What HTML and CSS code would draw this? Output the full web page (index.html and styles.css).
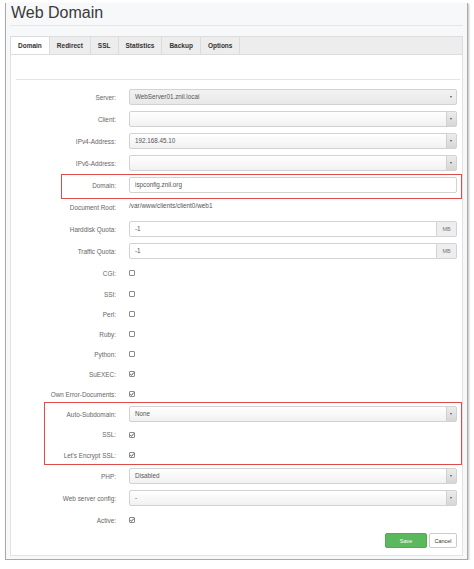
FILE: index.html
```html
<!DOCTYPE html>
<html>
    <head>
        <link rel="stylesheet" href="styles.css">
    </head>
    <body>
        <div class="sheet">
            <h1 class="title">Web Domain</h1>

            <div class="tabs">
                <span class="tab active">Domain</span>
                <span class="tab">Redirect</span>
                <span class="tab">SSL</span>
                <span class="tab">Statistics</span>
                <span class="tab">Backup</span>
                <span class="tab">Options</span>
            </div>

            <div class="panel">
                <div class="panel-head"></div>

                <form class="form">
                    <div class="row">
                        <label>Server:</label>
                        <div class="select locked">WebServer01.znil.local<span class="arrow"></span></div>
                    </div>
                    <div class="row">
                        <label>Client:</label>
                        <div class="select"><span class="arrow"></span></div>
                    </div>
                    <div class="row">
                        <label>IPv4-Address:</label>
                        <div class="select">192.168.45.10<span class="arrow"></span></div>
                    </div>
                    <div class="row">
                        <label>IPv6-Address:</label>
                        <div class="select"><span class="arrow"></span></div>
                    </div>
                    <div class="row">
                        <label>Domain:</label>
                        <div class="text-input">ispconfig.znil.org</div>
                    </div>
                    <div class="row">
                        <label>Document Root:</label>
                        <div class="static">/var/www/clients/client0/web1</div>
                    </div>
                    <div class="row">
                        <label>Harddisk Quota:</label>
                        <div class="group">
                            <div class="text-input">-1</div>
                            <span class="addon">MB</span>
                        </div>
                    </div>
                    <div class="row">
                        <label>Traffic Quota:</label>
                        <div class="group">
                            <div class="text-input">-1</div>
                            <span class="addon">MB</span>
                        </div>
                    </div>
                    <div class="row tall">
                        <label>CGI:</label>
                        <span class="check"></span>
                    </div>
                    <div class="row short">
                        <label>SSI:</label>
                        <span class="check"></span>
                    </div>
                    <div class="row short">
                        <label>Perl:</label>
                        <span class="check"></span>
                    </div>
                    <div class="row short">
                        <label>Ruby:</label>
                        <span class="check"></span>
                    </div>
                    <div class="row short">
                        <label>Python:</label>
                        <span class="check"></span>
                    </div>
                    <div class="row short">
                        <label>SuEXEC:</label>
                        <span class="check on"><svg viewBox="0 0 6 6"><path d="M1.2 3.1 L2.5 4.3 L4.9 1.5"/></svg></span>
                    </div>
                    <div class="row short">
                        <label>Own Error-Documents:</label>
                        <span class="check on"><svg viewBox="0 0 6 6"><path d="M1.2 3.1 L2.5 4.3 L4.9 1.5"/></svg></span>
                    </div>
                    <div class="row short">
                        <label>Auto-Subdomain:</label>
                        <div class="select">None<span class="arrow"></span></div>
                    </div>
                    <div class="row mid">
                        <label>SSL:</label>
                        <span class="check on"><svg viewBox="0 0 6 6"><path d="M1.2 3.1 L2.5 4.3 L4.9 1.5"/></svg></span>
                    </div>
                    <div class="row short">
                        <label>Let's Encrypt SSL:</label>
                        <span class="check on"><svg viewBox="0 0 6 6"><path d="M1.2 3.1 L2.5 4.3 L4.9 1.5"/></svg></span>
                    </div>
                    <div class="row">
                        <label>PHP:</label>
                        <div class="select">Disabled<span class="arrow"></span></div>
                    </div>
                    <div class="row">
                        <label>Web server config:</label>
                        <div class="select">-<span class="arrow"></span></div>
                    </div>
                    <div class="row">
                        <label>Active:</label>
                        <span class="check on"><svg viewBox="0 0 6 6"><path d="M1.2 3.1 L2.5 4.3 L4.9 1.5"/></svg></span>
                    </div>

                    <div class="buttons">
                        <button type="button" class="btn save">Save</button>
                        <button type="button" class="btn cancel">Cancel</button>
                    </div>

                    <!-- annotation boxes drawn over the form -->
                    <span class="mark mark-domain"></span>
                    <span class="mark mark-ssl"></span>
                </form>
            </div>
        </div>
    </body>
</html>
```

FILE: styles.css
```css
/* PAGE */
body {
    margin: 0;
    background: #fff;
    font-family: "Liberation Sans", Arial, sans-serif;
    color: #555;
}

.sheet {
    width: 463px;
    margin: 3px 0 0 5px;
    padding: 0 4px 3px 4px;
    box-sizing: border-box;
    background: #f7f8f9;
    border: 1px solid #a9a9a9;
    border-top: none;
    box-shadow: 1px 1px 2px rgba(0, 0, 0, .25);
}

.title {
    margin: 0 0 10px 0;
    padding: 2px 0 4px 1px;
    font-size: 16px;
    line-height: 16px;
    font-weight: normal;
    color: #3a3a3a;
    border-bottom: 1px solid #e4e7ea;
}

/* TABS */
.tabs {
    display: flex;
    height: 17px;
    background: #ededed;
    border: 1px solid #dcdcdc;
}

.tabs .tab {
    padding: 0 7px;
    font-size: 6.5px;
    font-weight: bold;
    line-height: 17px;
    color: #333;
    border-right: 1px solid #dcdcdc;
}

.tabs .active {
    background: #fff;
}

/* PANEL */
.panel {
    background: #fff;
    border: 1px solid #e2e2e2;
    border-top: none;
    padding: 0 2px 7px 5px;
}

.panel-head {
    height: 24px;
    border-bottom: 1px solid #e4e4e4;
}

.form {
    position: relative;
    padding: 6px 3px 0 0;
}

.form .row {
    display: grid;
    grid-template-columns: 100px 1fr;
    column-gap: 13px;
    align-items: center;
    height: 22px;
}

.form .short {
    height: 20px;
}

.form .mid {
    height: 21px;
}

.form label {
    text-align: right;
    font-size: 6.4px;
    color: #666;
}

/* FIELDS */
.select,
.text-input {
    position: relative;
    height: 16px;
    box-sizing: border-box;
    padding: 0 5px;
    font-size: 6.3px;
    line-height: 14px;
    color: #555;
    border: 1px solid #d2d2d2;
    border-radius: 2px;
    background: #fff;
}

.select {
    background: linear-gradient(#fff, #f1f1f1);
}

.select .arrow {
    position: absolute;
    top: 0;
    right: 0;
    width: 9px;
    height: 14px;
    background: linear-gradient(#ececec, #d6d6d6);
    border-left: 1px solid #d0d0d0;
}

.select .arrow::after {
    content: "";
    position: absolute;
    top: 6px;
    left: 3px;
    border-left: 1.5px solid transparent;
    border-right: 1.5px solid transparent;
    border-top: 2px solid #555;
}

.select.locked {
    background: linear-gradient(#f2f2f2, #e8e8e8);
}

.select.locked .arrow {
    background: none;
    border-left: none;
}

.static {
    font-size: 6.4px;
    color: #555;
    margin-top: -3px;
}

.group {
    display: flex;
}

.group .text-input {
    flex: 1;
    border-radius: 2px 0 0 2px;
}

.group .addon {
    width: 20px;
    height: 16px;
    box-sizing: border-box;
    text-align: center;
    font-size: 5.5px;
    line-height: 14px;
    color: #777;
    background: #eee;
    border: 1px solid #d2d2d2;
    border-left: none;
    border-radius: 0 2px 2px 0;
}

.check {
    display: block;
    width: 6px;
    height: 6px;
    box-sizing: border-box;
    border: 1px solid #8a8a8a;
    border-radius: 1px;
    background: #fff;
}

.check svg {
    display: block;
    width: 6px;
    height: 6px;
    margin: -1px 0 0 -1px;
}

.check svg path {
    fill: none;
    stroke: #444;
    stroke-width: .9;
}

/* BUTTONS */
.buttons {
    display: flex;
    justify-content: flex-end;
    gap: 2px;
    margin-top: 2px;
}

.btn {
    height: 15px;
    padding: 0;
    font-family: "Liberation Sans", Arial, sans-serif;
    font-size: 5.5px;
    border-radius: 2px;
}

.btn.save {
    width: 42px;
    color: #fff;
    background: #5cb85c;
    border: 1px solid #4cae4c;
}

.btn.cancel {
    width: 28px;
    color: #333;
    background: #fff;
    border: 1px solid #ccc;
}

/* ANNOTATIONS */
.mark {
    position: absolute;
    box-sizing: border-box;
    border: 1.5px solid #dd4b4b;
}

.mark-domain {
    left: 45px;
    top: 94px;
    width: 401px;
    height: 25px;
}

.mark-ssl {
    left: 28px;
    top: 322px;
    width: 418px;
    height: 63px;
}
```
